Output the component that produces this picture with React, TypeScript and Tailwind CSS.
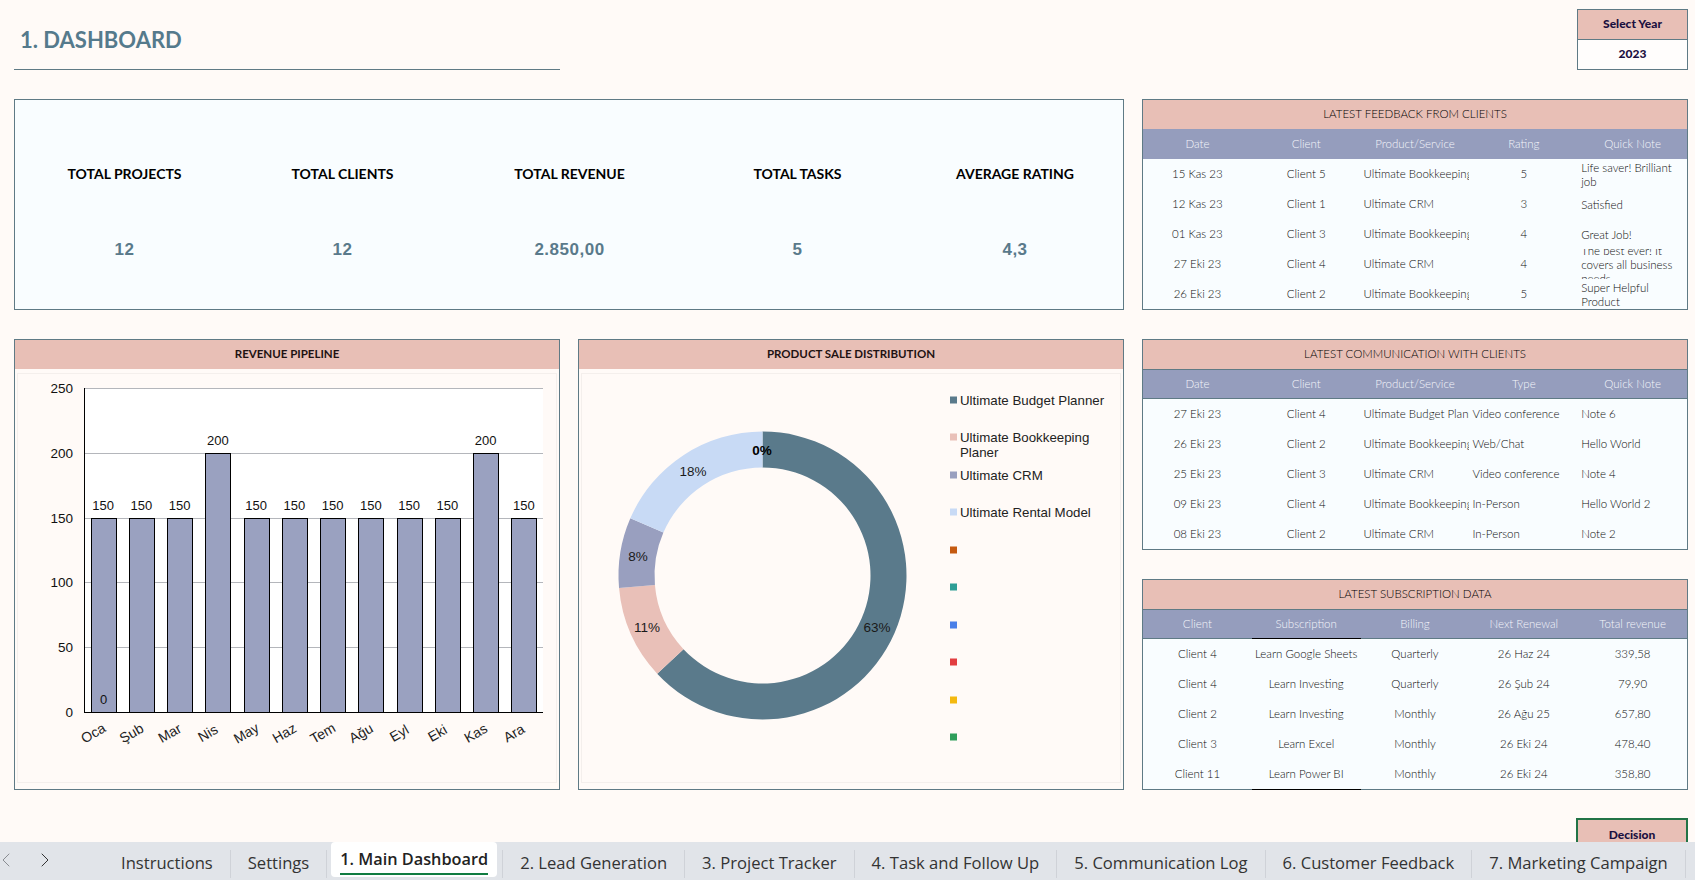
import React from 'react';
import { ChevronLeft, ChevronRight } from 'lucide-react';

const kpis = [
  { label: 'TOTAL PROJECTS', value: '12' },
  { label: 'TOTAL CLIENTS', value: '12' },
  { label: 'TOTAL REVENUE', value: '2.850,00' },
  { label: 'TOTAL TASKS', value: '5' },
  { label: 'AVERAGE RATING', value: '4,3' },
];

const feedbackRows = [
  ['15 Kas 23', 'Client 5', 'Ultimate Bookkeeping Planer', '5', 'Life saver! Brilliant job'],
  ['12 Kas 23', 'Client 1', 'Ultimate CRM', '3', 'Satisfied'],
  ['01 Kas 23', 'Client 3', 'Ultimate Bookkeeping Planer', '4', 'Great Job!'],
  ['27 Eki 23', 'Client 4', 'Ultimate CRM', '4', 'The best ever! It covers all business needs'],
  ['26 Eki 23', 'Client 2', 'Ultimate Bookkeeping Planer', '5', 'Super Helpful Product'],
];

const commRows = [
  ['27 Eki 23', 'Client 4', 'Ultimate Budget Planner', 'Video conference', 'Note 6'],
  ['26 Eki 23', 'Client 2', 'Ultimate Bookkeeping Planer', 'Web/Chat', 'Hello World'],
  ['25 Eki 23', 'Client 3', 'Ultimate CRM', 'Video conference', 'Note 4'],
  ['09 Eki 23', 'Client 4', 'Ultimate Bookkeeping Planer', 'In-Person', 'Hello World 2'],
  ['08 Eki 23', 'Client 2', 'Ultimate CRM', 'In-Person', 'Note 2'],
];

const subRows = [
  ['Client 4', 'Learn Google Sheets', 'Quarterly', '26 Haz 24', '339,58'],
  ['Client 4', 'Learn Investing', 'Quarterly', '26 Şub 24', '79,90'],
  ['Client 2', 'Learn Investing', 'Monthly', '26 Ağu 25', '657,80'],
  ['Client 3', 'Learn Excel', 'Monthly', '26 Eki 24', '478,40'],
  ['Client 11', 'Learn Power BI', 'Monthly', '26 Eki 24', '358,80'],
];

const months = [
  { name: 'Oca', value: 150 },
  { name: 'Şub', value: 150 },
  { name: 'Mar', value: 150 },
  { name: 'Nis', value: 200 },
  { name: 'May', value: 150 },
  { name: 'Haz', value: 150 },
  { name: 'Tem', value: 150 },
  { name: 'Ağu', value: 150 },
  { name: 'Eyl', value: 150 },
  { name: 'Eki', value: 150 },
  { name: 'Kas', value: 200 },
  { name: 'Ara', value: 150 },
];

const slices = [
  { from: 0, to: 227, color: '#5a7a8b' },
  { from: 227, to: 265, color: '#e9c0b8' },
  { from: 265, to: 293.4, color: '#999fbf' },
  { from: 293.4, to: 360, color: '#c8daf5' },
];

const legend = [
  { color: '#5a7a8b', y: 400, text: ['Ultimate Budget Planner'] },
  { color: '#e9c0b8', y: 437, text: ['Ultimate Bookkeeping', 'Planer'] },
  { color: '#999fbf', y: 475, text: ['Ultimate CRM'] },
  { color: '#c8daf5', y: 512, text: ['Ultimate Rental Model'] },
  { color: '#c55a11', y: 550, text: [] },
  { color: '#2e9e96', y: 587, text: [] },
  { color: '#4a7fe8', y: 625, text: [] },
  { color: '#e23d40', y: 662, text: [] },
  { color: '#f4b90f', y: 700, text: [] },
  { color: '#2f9e5b', y: 737, text: [] },
];

const tabs = ['Instructions', 'Settings', '1. Main Dashboard', '2. Lead Generation', '3. Project Tracker', '4. Task and Follow Up', '5. Communication Log', '6. Customer Feedback', '7. Marketing Campaign'];

const chartFont = '"Liberation Sans", Arial, sans-serif';

function polar(r: number, deg: number) {
  const a = (deg * Math.PI) / 180;
  return [762.5 + r * Math.sin(a), 575.5 - r * Math.cos(a)];
}

function ringPath(from: number, to: number) {
  const [x1, y1] = polar(144, from);
  const [x2, y2] = polar(144, to);
  const [x3, y3] = polar(108, to);
  const [x4, y4] = polar(108, from);
  const large = to - from > 180 ? 1 : 0;
  return `M${x1} ${y1}A144 144 0 ${large} 1 ${x2} ${y2}L${x3} ${y3}A108 108 0 ${large} 0 ${x4} ${y4}Z`;
}

type Align = 'center' | 'left';

function DataTable({ title, heads, rows, aligns, ruled, marked }: { title: string; heads: string[]; rows: string[][]; aligns: Align[]; ruled?: boolean; marked?: boolean }) {
  return (
    <div className="h-[211px] border border-[#5f7a85] bg-[#f9fdff] text-[11.5px] font-light text-[#0d0d0d]">
      <div className="h-[29px] bg-[#e8bfb6] flex items-center justify-center pb-px text-black">{title}</div>
      <div className={`h-[30px] grid grid-cols-5 bg-[#959dbd] text-[#f4f5fb] ${ruled ? 'border-y border-[#5f7a85]' : ''}`}>
        {heads.map((h, i) => (
          <div key={h} className={`flex items-center justify-center ${marked && i === 1 ? 'border-b border-black -mb-px' : ''}`}>{h}</div>
        ))}
      </div>
      <div className="grid grid-cols-5">
        {rows.flatMap((row, r) =>
          row.map((cell, c) => {
            const note = aligns[c] === 'left' && c === 4;
            return (
              <div
                key={`${r}-${c}`}
                className={`h-[30px] flex items-center overflow-hidden ${aligns[c] === 'center' ? 'justify-center text-center whitespace-nowrap' : 'pl-[3px]'} ${note ? 'leading-[14px]' : aligns[c] === 'left' ? 'whitespace-nowrap' : ''} ${note && !ruled ? 'pt-px' : ''} ${marked && c === 1 && r === 4 ? 'h-[31px] -mb-px border-b border-black' : ''}`}
              >
                {cell}
              </div>
            );
          })
        )}
      </div>
    </div>
  );
}

function PanelTitle({ children }: { children: React.ReactNode }) {
  return <div className="h-[29px] bg-[#e8bfb6] flex items-center justify-center pb-px text-[11.5px] font-bold text-[#1f1212]">{children}</div>;
}

function RevenueChart() {
  const zero = 712;
  const unit = 64.8 / 50;
  return (
    <svg width="544" height="420" viewBox="15 369 544 420" style={{ fontFamily: chartFont }}>
      <rect x="17.5" y="373.5" width="539" height="409" fill="#fffaf7" stroke="#f4efec" />
      <rect x="84" y="388" width="459" height="324" fill="#ffffff" />
      {[0, 50, 100, 150, 200, 250].map((v) => {
        const y = Math.round(zero - v * unit) + 0.5;
        return (
          <g key={v}>
            {v > 0 && <line x1="84" x2="543" y1={y} y2={y} stroke="#b4b6bb" />}
            <text x="73" y={y + 4} textAnchor="end" fontSize="13.5" fill="#111">{v}</text>
          </g>
        );
      })}
      {months.map((m, i) => {
        const cx = 84 + 38.25 * (i + 0.5);
        const top = zero - m.value * unit;
        return (
          <g key={m.name}>
            <rect x={Math.round(cx - 12.5) + 0.5} y={Math.round(top) + 0.5} width="25" height={zero - Math.round(top)} fill="#9aa1c0" stroke="#000" />
            <text x={cx} y={top - 8} textAnchor="middle" fontSize="13" fill="#111">{m.value}</text>
            <text x={cx - 10} y="738" textAnchor="middle" fontSize="14" fill="#222" transform={`rotate(-30 ${cx - 10} 733)`}>{m.name}</text>
          </g>
        );
      })}
      <text x="103.5" y="704" textAnchor="middle" fontSize="13" fill="#111">0</text>
      <line x1="84.5" x2="84.5" y1="388" y2="712.5" stroke="#000" />
      <line x1="84" x2="543" y1="712.5" y2="712.5" stroke="#000" />
    </svg>
  );
}

function DonutChart() {
  return (
    <svg width="544" height="420" viewBox="579 369 544 420" style={{ fontFamily: chartFont }}>
      <rect x="581.5" y="373.5" width="539" height="409" fill="#fffaf7" stroke="#f4efec" />
      {slices.map((s) => (
        <path key={s.from} d={ringPath(s.from, s.to)} fill={s.color} />
      ))}
      <g fontSize="13.5" fill="#1a1a1a" textAnchor="middle">
        <text x="877" y="632">63%</text>
        <text x="647" y="632">11%</text>
        <text x="638" y="561">8%</text>
        <text x="693" y="476">18%</text>
        <text x="762" y="455" fontWeight="700" fill="#000">0%</text>
      </g>
      {legend.map((l) => (
        <g key={l.color}>
          <rect x="950" y={l.y - 3.5} width="7" height="7" fill={l.color} />
          {l.text.map((t, i) => (
            <text key={t} x="960" y={l.y + 5 + i * 15} fontSize="13.3" fill="#222">{t}</text>
          ))}
        </g>
      ))}
    </svg>
  );
}

export default function App() {
  return (
    <div className="h-[880px] w-[1695px] overflow-hidden flex flex-col bg-[#fffaf7] font-['Lato',sans-serif]">
      <div className="flex-1 min-h-0 overflow-hidden pl-[14px] pr-[7px] pt-[9px]">
        <div className="grid grid-cols-3 gap-x-[18px]">
          <div className="h-[61px] border-b border-[#5f7a85] pl-[6px] pt-[19px] text-[22px] leading-[23px] font-bold text-[#557a8c]">1. DASHBOARD</div>
          <div />
          <div className="flex justify-end">
            <div className="w-[111px] h-[61px] border border-[#5f7a85] bg-[#fffdfc] text-[12px] font-black text-[#1b1040] text-center">
              <div className="h-[30px] bg-[#e8bfb6] border-b border-[#5f7a85] flex items-center justify-center pb-px">Select Year</div>
              <div className="h-[29px] flex items-center justify-center pb-px">2023</div>
            </div>
          </div>
        </div>

        <div className="grid grid-cols-3 gap-x-[18px] mt-[29px]">
          <div className="col-span-2 h-[211px] border border-[#5f7a85] bg-[#f9fdff] grid grid-cols-[219px_217px_237px_219px_1fr]">
            {kpis.map((k) => (
              <div key={k.label} className="flex flex-col items-center">
                <div className="mt-[66px] text-[14px] leading-[16px] font-bold text-black">{k.label}</div>
                <div className="mt-[58px] text-[17px] leading-[20px] tracking-[0.5px] font-bold text-[#5a7a8b] font-['Liberation_Sans',sans-serif]">{k.value}</div>
              </div>
            ))}
          </div>
          <DataTable
            title="LATEST FEEDBACK FROM CLIENTS"
            heads={['Date', 'Client', 'Product/Service', 'Rating', 'Quick Note']}
            rows={feedbackRows}
            aligns={['center', 'center', 'left', 'center', 'left']}
          />
        </div>

        <div className="grid grid-cols-3 gap-x-[18px] mt-[29px]">
          <div className="h-[451px] border border-[#5f7a85] bg-[#fffaf7] overflow-hidden">
            <PanelTitle>REVENUE PIPELINE</PanelTitle>
            <RevenueChart />
          </div>
          <div className="h-[451px] border border-[#5f7a85] bg-[#fffaf7] overflow-hidden">
            <PanelTitle>PRODUCT SALE DISTRIBUTION</PanelTitle>
            <DonutChart />
          </div>
          <div className="flex flex-col gap-[29px]">
            <DataTable
              title="LATEST COMMUNICATION WITH CLIENTS"
              heads={['Date', 'Client', 'Product/Service', 'Type', 'Quick Note']}
              rows={commRows}
              aligns={['center', 'center', 'left', 'left', 'left']}
              ruled
            />
            <DataTable
              title="LATEST SUBSCRIPTION DATA"
              heads={['Client', 'Subscription', 'Billing', 'Next Renewal', 'Total revenue']}
              rows={subRows}
              aligns={['center', 'center', 'center', 'center', 'center']}
              ruled
              marked
            />
          </div>
        </div>

        <div className="flex justify-end mt-[28px]">
          <div className="w-[112px] h-[40px] border-2 border-[#217346] bg-[#e8bfb6] pt-[6px] text-center text-[12px] font-black text-[#1b1040]">Decision</div>
        </div>
      </div>

      <div className="h-[38px] shrink-0 bg-[#e1e4e9] flex items-stretch font-['Open_Sans',sans-serif] text-[16.6px] text-[#333]">
        <div className="w-[104px] shrink-0 flex items-center text-[#333] pb-[2px]">
          <ChevronLeft size={24} strokeWidth={1} className="-ml-[6px] text-[#8a8d92]" />
          <ChevronRight size={24} strokeWidth={1} className="ml-[15px]" />
        </div>
        {tabs.map((t) => {
          const active = t === '1. Main Dashboard';
          return (
            <React.Fragment key={t}>
              {active ? (
                <div className="ml-[4px] mr-[5px] h-[35px] bg-white rounded-[4px] px-[9px] flex flex-col items-center pt-[5px] text-[16.3px] font-semibold text-[#222] whitespace-nowrap">
                  <span className="leading-[24px] border-b-2 border-[#107c41] pb-[2px]">{t}</span>
                </div>
              ) : (
                <div className="flex items-center px-[17px] whitespace-nowrap">
                  <span className="pt-[4px]">{t}</span>
                </div>
              )}
              <span className="w-px h-[28px] self-end mb-[2px] bg-[#cfd2d8] shrink-0" />
            </React.Fragment>
          );
        })}
      </div>
    </div>
  );
}
